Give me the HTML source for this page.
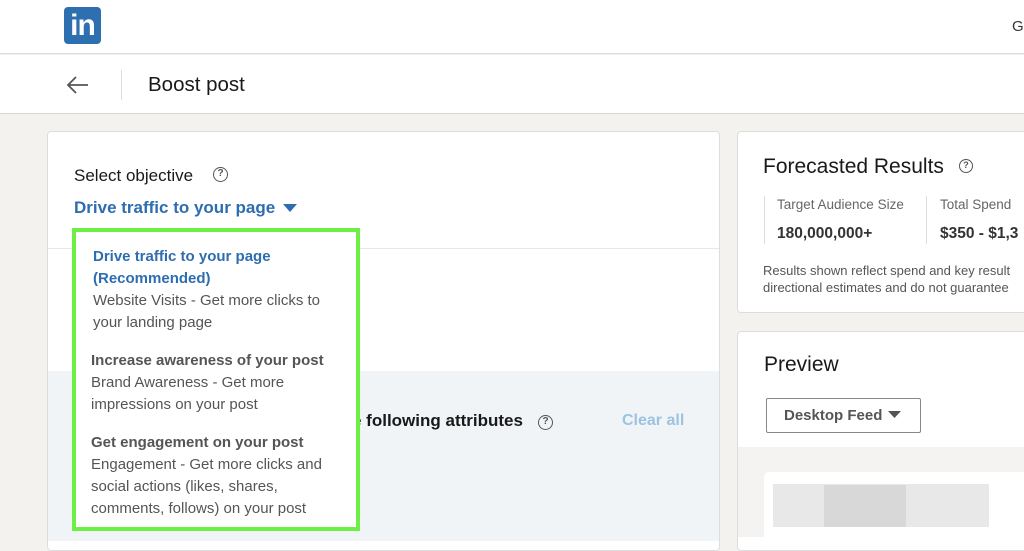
<!DOCTYPE html>
<html><head><meta charset="utf-8"><style>
*{margin:0;padding:0;box-sizing:border-box}
body{width:1024px;height:534px;overflow:hidden;background:#f3f2ef;font-family:"Liberation Sans",sans-serif;position:relative;color:#191919}
.a{position:absolute;white-space:nowrap}
.q{position:absolute;width:15px;height:15px;border:1.6px solid #555;border-radius:50%;font-size:10px;font-weight:bold;text-align:center;line-height:12px;color:#555}
.n{display:inline-block}
</style></head><body>
<div class="a" style="left:0;top:0;width:1024px;height:54px;background:#fff;border-bottom:1px solid #dcdcdc"></div>
<div class="a" style="left:64px;top:7px;width:37px;height:37px;background:#2e6fb0;border-radius:4px;color:#fff;font-weight:bold;font-size:30px;line-height:38px;text-align:center;letter-spacing:-1px">in</div>
<div class="a" style="left:1012px;top:18px;font-size:15px;color:#333">G</div>
<div class="a" style="left:0;top:55px;width:1024px;height:59px;background:#fff;border-bottom:1px solid #d6d6d6"></div>
<svg class="a" style="left:66px;top:75px" width="24" height="20" viewBox="0 0 24 20"><path d="M22 10H2M10 2L2 10l8 8" fill="none" stroke="#555" stroke-width="1.8"/></svg>
<div class="a" style="left:121px;top:70px;width:1px;height:30px;background:#ddd"></div>
<div class="a" style="left:148px;top:73px;font-size:20.5px">Boost post</div>

<div class="a" style="left:47px;top:131px;width:673px;height:420px;background:#fff;border:1px solid #ddd;border-radius:4px"></div>
<div class="a" style="left:48px;top:248px;width:671px;height:1px;background:#e8e8e8"></div>
<div class="a" style="left:48px;top:371px;width:671px;height:170px;background:#f1f4f7"></div>
<div class="a" style="left:74px;top:166px;font-size:17px">Select objective</div>
<div class="q" style="left:213px;top:167px">?</div>
<div class="a" style="left:74px;top:198px;font-size:17px;font-weight:bold;color:#2d6db0">Drive traffic to your page</div>
<svg class="a" style="left:283px;top:204px" width="14" height="8"><path d="M0 0h14L7 8z" fill="#2d6db0"/></svg>
<div class="a" style="left:352px;top:411px;font-size:17px;font-weight:bold">e following attributes</div>
<div class="q" style="left:538px;top:415px">?</div>
<div class="a" style="left:622px;top:412px;font-size:16px;color:#9cc3df;font-weight:bold">Clear all</div>

<div class="a" style="left:72px;top:228px;width:288px;height:303px;background:#fff;border:4px solid #6cf046"></div>
<div class="a" style="left:93px;top:246px;font-size:15px;line-height:22px;color:#555">
<span class="n" style="color:#2d6db0;font-weight:bold">Drive traffic to your page</span><br>
<span class="n" style="color:#2d6db0;font-weight:bold">(Recommended)</span><br>
<span class="n">Website Visits - Get more clicks to</span><br>
<span class="n">your landing page</span></div>
<div class="a" style="left:91px;top:350px;font-size:15px;line-height:22px;color:#555">
<span class="n" style="font-weight:bold">Increase awareness of your post</span><br>
<span class="n">Brand Awareness - Get more</span><br>
<span class="n">impressions on your post</span></div>
<div class="a" style="left:91px;top:432px;font-size:15px;line-height:22px;color:#555">
<span class="n" style="font-weight:bold">Get engagement on your post</span><br>
<span class="n">Engagement - Get more clicks and</span><br>
<span class="n">social actions (likes, shares,</span><br>
<span class="n">comments, follows) on your post</span></div>

<div class="a" style="left:737px;top:131px;width:300px;height:182px;background:#fff;border:1px solid #ddd;border-radius:4px"></div>
<div class="a" style="left:763px;top:155px;font-size:21px">Forecasted Results</div>
<div class="q" style="left:959px;top:159px;width:14px;height:14px;font-size:9px;line-height:11px">?</div>
<div class="a" style="left:764px;top:196px;width:1px;height:48px;background:#ddd"></div>
<div class="a" style="left:926px;top:196px;width:1px;height:48px;background:#ddd"></div>
<div class="a" style="left:777px;top:197px;font-size:13.5px;color:#666">Target Audience Size</div>
<div class="a" style="left:777px;top:225px;font-size:15.5px;font-weight:bold;color:#333">180,000,000+</div>
<div class="a" style="left:940px;top:197px;font-size:13.5px;color:#666">Total Spend</div>
<div class="a" style="left:940px;top:225px;font-size:15.5px;font-weight:bold;color:#333">$350 - $1,3</div>
<div class="a" style="left:763px;top:262px;font-size:13px;line-height:17px;color:#555">Results shown reflect spend and key result<br>directional estimates and do not guarantee</div>

<div class="a" style="left:737px;top:331px;width:300px;height:220px;background:#fff;border:1px solid #ddd;border-radius:4px"></div>
<div class="a" style="left:764px;top:353px;font-size:21px">Preview</div>
<div class="a" style="left:766px;top:398px;width:155px;height:35px;border:1px solid #888;border-radius:2px;font-size:15px;font-weight:bold;color:#555;padding:8px 0 0 17px">Desktop Feed</div>
<svg class="a" style="left:888px;top:411px" width="13" height="7"><path d="M0 0h13L6.5 7z" fill="#555"/></svg>
<div class="a" style="left:738px;top:447px;width:290px;height:90px;background:#f4f3f1"></div>
<div class="a" style="left:764px;top:472px;width:270px;height:70px;background:#fff;border-radius:5px"></div>
<div class="a" style="left:773px;top:484px;width:216px;height:43px;background:#e8e8e8"></div>
<div class="a" style="left:824px;top:485px;width:82px;height:42px;background:#d8d8d8"></div>
</body></html>
